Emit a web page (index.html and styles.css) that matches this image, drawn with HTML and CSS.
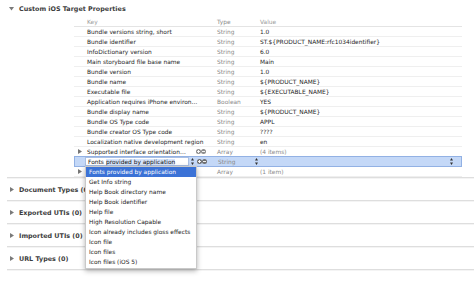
FILE: index.html
```html
<!DOCTYPE html>
<html lang="en">
<head>
    <meta charset="UTF-8">
    <title>Info</title>
    <link rel="stylesheet" href="styles.css">
</head>
<body>
    <div class="editor">
        <div class="section open">
            <div class="section-head">
                <svg class="disc" width="5" height="5" viewBox="0 0 10 10"><path d="M0 2h10L5 9z"/></svg>
                <b>Custom iOS Target Properties</b>
            </div>
            <div class="plist">
                <div class="row head"><span class="tri"></span><span class="key"><span class="k">Key</span></span><span class="type">Type</span><span class="value">Value</span></div>
                <div class="row"><span class="tri"></span><span class="key"><span class="k">Bundle versions string, short</span></span><span class="type">String</span><span class="value">1.0</span></div>
                <div class="row"><span class="tri"></span><span class="key"><span class="k">Bundle identifier</span></span><span class="type">String</span><span class="value">ST.${PRODUCT_NAME:rfc1034identifier}</span></div>
                <div class="row"><span class="tri"></span><span class="key"><span class="k">InfoDictionary version</span></span><span class="type">String</span><span class="value">6.0</span></div>
                <div class="row"><span class="tri"></span><span class="key"><span class="k">Main storyboard file base name</span></span><span class="type">String</span><span class="value">Main</span></div>
                <div class="row"><span class="tri"></span><span class="key"><span class="k">Bundle version</span></span><span class="type">String</span><span class="value">1.0</span></div>
                <div class="row"><span class="tri"></span><span class="key"><span class="k">Bundle name</span></span><span class="type">String</span><span class="value">${PRODUCT_NAME}</span></div>
                <div class="row"><span class="tri"></span><span class="key"><span class="k">Executable file</span></span><span class="type">String</span><span class="value">${EXECUTABLE_NAME}</span></div>
                <div class="row"><span class="tri"></span><span class="key"><span class="k">Application requires iPhone environ…</span></span><span class="type">Boolean</span><span class="value">YES</span></div>
                <div class="row"><span class="tri"></span><span class="key"><span class="k">Bundle display name</span></span><span class="type">String</span><span class="value">${PRODUCT_NAME}</span></div>
                <div class="row"><span class="tri"></span><span class="key"><span class="k">Bundle OS Type code</span></span><span class="type">String</span><span class="value">APPL</span></div>
                <div class="row"><span class="tri"></span><span class="key"><span class="k">Bundle creator OS Type code</span></span><span class="type">String</span><span class="value">????</span></div>
                <div class="row"><span class="tri"></span><span class="key"><span class="k">Localization native development region</span></span><span class="type">String</span><span class="value">en</span></div>
                <div class="row">
                    <span class="tri"><svg width="4" height="5" viewBox="0 0 8 10"><path d="M0 0v10l8-5z"/></svg></span>
                    <span class="key">
                        <span class="k">Supported interface orientation…</span>
                        <span class="ctrls">
                            <svg width="5" height="5" viewBox="0 0 10 10"><circle cx="5" cy="5" r="5" fill="#8d8d8d"/><path d="M5 2v6M2 5h6" stroke="#fff" stroke-width="1.8"/></svg>
                            <svg width="5" height="5" viewBox="0 0 10 10"><circle cx="5" cy="5" r="5" fill="#8d8d8d"/><path d="M2 5h6" stroke="#fff" stroke-width="1.8"/></svg>
                        </span>
                    </span>
                    <span class="type">Array</span><span class="value dim">(4 items)</span>
                </div>
                <div class="row selected">
                    <span class="tri"></span>
                    <span class="key">
                        <span class="field">Fonts <span class="sel">provided by application</span>
                            <div class="menu">
                                <div class="item hi">Fonts provided by application</div>
                                <div class="item">Get Info string</div>
                                <div class="item">Help Book directory name</div>
                                <div class="item">Help Book identifier</div>
                                <div class="item">Help file</div>
                                <div class="item">High Resolution Capable</div>
                                <div class="item">Icon already includes gloss effects</div>
                                <div class="item">Icon file</div>
                                <div class="item">Icon files</div>
                                <div class="item">Icon files (iOS 5)</div>
                            </div>
                        </span>
                        <span class="ctrls">
                            <svg class="step" width="3" height="7" viewBox="0 0 6 14"><path d="M3 0l3 5H0zM3 14l3-5H0z"/></svg>
                            <svg width="5" height="5" viewBox="0 0 10 10"><circle cx="5" cy="5" r="5" fill="#6f6f6f"/><path d="M5 2v6M2 5h6" stroke="#fff" stroke-width="1.8"/></svg>
                            <svg width="5" height="5" viewBox="0 0 10 10"><circle cx="5" cy="5" r="5" fill="#6f6f6f"/><path d="M2 5h6" stroke="#fff" stroke-width="1.8"/></svg>
                        </span>
                    </span>
                    <span class="type">String<svg class="step" width="3" height="7" viewBox="0 0 6 14"><path d="M3 0l3 5H0zM3 14l3-5H0z"/></svg></span>
                    <span class="value"><svg class="step" width="3" height="7" viewBox="0 0 6 14"><path d="M3 0l3 5H0zM3 14l3-5H0z"/></svg></span>
                </div>
                <div class="row">
                    <span class="tri"><svg width="4" height="5" viewBox="0 0 8 10"><path d="M0 0v10l8-5z"/></svg></span>
                    <span class="key"><span class="k"></span></span>
                    <span class="type">Array</span><span class="value dim">(1 item)</span>
                </div>
            </div>
        </div>

        <div class="section">
            <div class="section-head"><svg class="disc" width="4" height="5" viewBox="0 0 8 10"><path d="M0 0v10l8-5z"/></svg><b>Document Types (0)</b></div>
        </div>
        <div class="section">
            <div class="section-head"><svg class="disc" width="4" height="5" viewBox="0 0 8 10"><path d="M0 0v10l8-5z"/></svg><b>Exported UTIs (0)</b></div>
        </div>
        <div class="section">
            <div class="section-head"><svg class="disc" width="4" height="5" viewBox="0 0 8 10"><path d="M0 0v10l8-5z"/></svg><b>Imported UTIs (0)</b></div>
        </div>
        <div class="section">
            <div class="section-head"><svg class="disc" width="4" height="5" viewBox="0 0 8 10"><path d="M0 0v10l8-5z"/></svg><b>URL Types (0)</b></div>
        </div>
    </div>
</body>
</html>
```

FILE: styles.css
```css
/* Base */
* { margin: 0; padding: 0; box-sizing: border-box; }
body { background: #fff; font-family: "DejaVu Sans", "Liberation Sans", sans-serif; font-size: 5.9px; color: #1e1e1e; width: 474px; height: 283px; overflow: hidden; }
.editor { margin-left: 7px; }

/* Sections */
.section { border-bottom: 1px solid #dedede; box-shadow: 0 1px 0 #f4f4f4; margin-bottom: 1px; }
.section-head { height: 21px; display: flex; align-items: center; padding-left: 3px; color: #3c3c3c; }
.section-head b { font-weight: bold; margin-left: 5px; font-size: 6.4px; }
.section.open .section-head { height: 17px; padding-left: 2px; }
.disc { fill: #7a7a7a; flex: none; }

/* Property list table */
.plist { margin-left: 67px; width: 388px; }
.row { display: flex; align-items: center; height: 10px; border-bottom: 1px solid #efefef; white-space: nowrap; }
.row.head { color: #9a9a9a; border-bottom-color: #e4e4e4; }
.tri { width: 10px; flex: none; display: flex; justify-content: flex-end; padding-right: 2px; fill: #777; }
.key { width: 133px; flex: none; display: flex; align-items: center; padding-right: 11px; position: relative; }
.k { flex: 1; padding-left: 3px; }
.ctrls { display: flex; align-items: center; margin-left: auto; }
.ctrls svg { display: block; }
.type { width: 43px; flex: none; color: #8a8a8a; display: flex; align-items: center; }
.value { flex: 1; display: flex; align-items: center; }
.value.dim { color: #8a8a8a; }
.step { fill: #333; display: block; flex: none; }

/* Selected row with combo box */
.row.selected { background: #c4d8f7; border: 1px solid #92b1e4; height: 11px; margin-top: -1px; }
.row.selected .field { width: 104px; height: 9px; background: #fff; padding-left: 3px; display: flex; align-items: center; position: relative; color: #111; box-shadow: inset 0 0 0 1px #a9bfe3; }
.row.selected .sel { background: #d6e4fb; margin-left: 2px; }
.row.selected .ctrls .step { margin-right: 3px; }
.row.selected .type .step { margin-left: auto; margin-right: 3px; }
.row.selected .value .step { margin-left: auto; margin-right: 8px; }

/* Completion menu */
.menu { position: absolute; left: 0; top: 9px; width: 112px; background: #fff; border: 1px solid #c9c9c9; box-shadow: 0 2px 5px rgba(0, 0, 0, 0.3); z-index: 5; padding-bottom: 1px; }
.item { height: 10px; line-height: 10px; padding-left: 3px; color: #222; }
.item.hi { background: #3b72d6; color: #fff; }
```
